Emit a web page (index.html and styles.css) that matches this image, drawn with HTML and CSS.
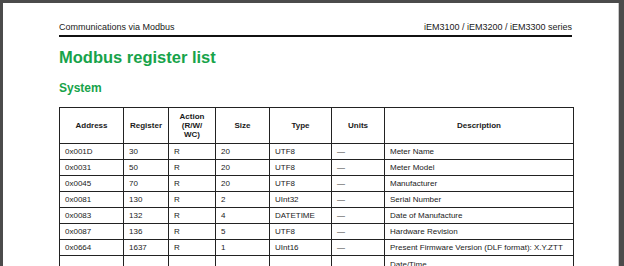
FILE: index.html
```html
<!DOCTYPE html>
<html>
<head>
<meta charset="utf-8">
<link rel="stylesheet" href="styles.css">
</head>
<body>
<div class="frame">
  <div class="page">
    <div class="running-head">
      <span>Communications via Modbus</span>
      <span>iEM3100 / iEM3200 / iEM3300 series</span>
    </div>
    <h1 class="title">Modbus register list</h1>
    <h2 class="section">System</h2>
    <table class="regs">
      <colgroup>
        <col class="c-addr"><col class="c-reg"><col class="c-act"><col class="c-size"><col class="c-type"><col class="c-units"><col class="c-desc">
      </colgroup>
      <thead>
        <tr>
          <th>Address</th>
          <th>Register</th>
          <th>Action<br>(R/W/<br>WC)</th>
          <th>Size</th>
          <th>Type</th>
          <th>Units</th>
          <th>Description</th>
        </tr>
      </thead>
      <tbody>
        <tr><td>0x001D</td><td>30</td><td>R</td><td>20</td><td>UTF8</td><td>—</td><td>Meter Name</td></tr>
        <tr><td>0x0031</td><td>50</td><td>R</td><td>20</td><td>UTF8</td><td>—</td><td>Meter Model</td></tr>
        <tr><td>0x0045</td><td>70</td><td>R</td><td>20</td><td>UTF8</td><td>—</td><td>Manufacturer</td></tr>
        <tr><td>0x0081</td><td>130</td><td>R</td><td>2</td><td>UInt32</td><td>—</td><td>Serial Number</td></tr>
        <tr><td>0x0083</td><td>132</td><td>R</td><td>4</td><td>DATETIME</td><td>—</td><td>Date of Manufacture</td></tr>
        <tr><td>0x0087</td><td>136</td><td>R</td><td>5</td><td>UTF8</td><td>—</td><td>Hardware Revision</td></tr>
        <tr><td>0x0664</td><td>1637</td><td>R</td><td>1</td><td>UInt16</td><td>—</td><td>Present Firmware Version (DLF format): X.Y.ZTT</td></tr>
        <tr class="cut"><td>&nbsp;</td><td>&nbsp;</td><td>&nbsp;</td><td>&nbsp;</td><td>&nbsp;</td><td>&nbsp;</td><td>Date/Time</td></tr>
      </tbody>
    </table>
  </div>
</div>
</body>
</html>
```
FILE: styles.css
```css
html, body {
  margin: 0;
  padding: 0;
  height: 100%;
  overflow: hidden;
  background: #4a4a4a;
}

.frame {
  padding: 3px 5px 0 3px;
  height: 100%;
  box-sizing: border-box;
  background: #4b4b4b;
}

.page {
  background: #ffffff;
  height: 100%;
  box-sizing: border-box;
  padding: 19px 0 0 56px;
  width: 616px;
  border-right: 1px solid #c8c8c8;
  font-family: "Liberation Sans", Arial, sans-serif;
  color: #1a1a1a;
}

.running-head {
  width: 513px;
  display: flex;
  justify-content: space-between;
  font-size: 9px;
  line-height: 11px;
  padding-bottom: 2px;
  border-bottom: 2px solid #111;
}

.title {
  margin: 10px 0 0 0;
  font-size: 16.5px;
  line-height: 20px;
  font-weight: bold;
  color: #17a34a;
}

.section {
  margin: 14px 0 0 0;
  font-size: 12px;
  line-height: 14px;
  font-weight: bold;
  color: #17a34a;
}

.regs {
  margin-top: 12px;
  border-collapse: collapse;
  table-layout: fixed;
  width: 514px;
  font-size: 8px;
  color: #1a1a1a;
}

.c-addr { width: 64px; }
.c-reg { width: 45px; }
.c-act { width: 47px; }
.c-size { width: 54px; }
.c-type { width: 62px; }
.c-units { width: 53px; }
.c-desc { width: 189px; }

.regs th,
.regs td {
  border: 1px solid #222;
  padding: 0 0 0 5px;
  white-space: nowrap;
}

.regs th {
  height: 35px;
  padding: 0;
  text-align: center;
  font-weight: bold;
  line-height: 9px;
}

.regs td {
  height: 15px;
  line-height: 9px;
}

.regs .cut td {
  vertical-align: top;
  padding-top: 4px;
}
```
